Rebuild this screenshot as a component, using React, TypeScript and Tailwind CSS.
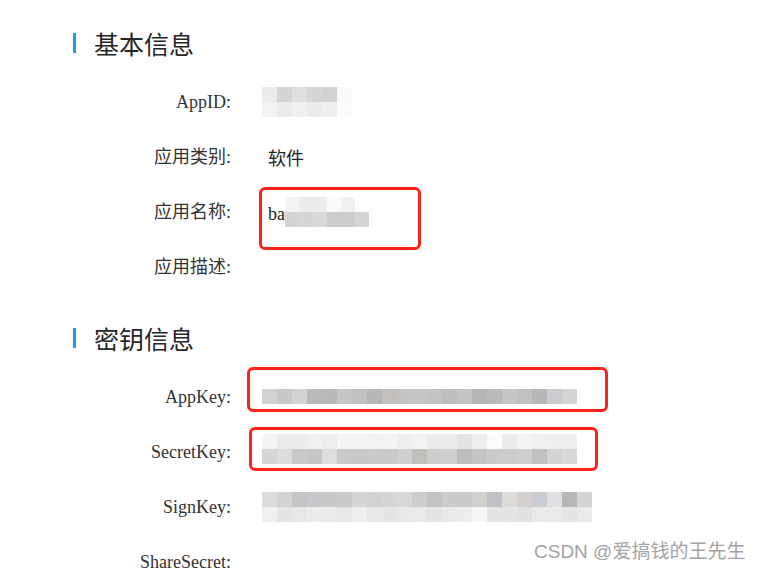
import React from "react";

type Row = { label: string; value?: React.ReactNode };

const LABEL_FONT = {
  fontFamily: '"Liberation Serif", "Noto Sans CJK SC", serif',
};

// blurred (mosaic) values, one array per block row
const appIdBlur = [
  ["#ebebeb", "#d4d4d4", "#dfdfdf", "#d5d5d5", "#d3d2d2", "#f9fafc"],
  ["#f3f3f3", "#ebebeb", "#f0f0f0", "#ebebeb", "#efeeed", "#fafbfc"],
];

const nameBlur = [
  ["#f3f3f3", "#ececec", "#ececec", "#f8f9fb", "#f1f1f1", "#ffffff"],
  ["#d3d3d3", "#d6d6d6", "#d8d8d8", "#cdccca", "#cdcdcd", "#d5d5d6"],
];

const appKeyBlur = [
  [
    "#d2d2d1", "#c8c8c8", "#d3d3d2", "#bbbbbb", "#b9b9b8", "#c6c6c6", "#c2c0c0",
    "#b5b8b9", "#c4c0be", "#c2c4c6", "#c5c5c5", "#c3c3c3", "#bfbdbc", "#c4c4c4",
    "#b5b6b8", "#bbbbbb", "#c6c6c6", "#c1c1c1", "#b8b7b5", "#cbccd0", "#d5d5d6",
  ],
];

const secretKeyBlur = [
  [
    "#f4f4f4", "#ebebeb", "#ececec", "#eff0f2", "#ededed", "#f5f5f5", "#f4f4f4",
    "#f2f2f2", "#f4f4f4", "#eeeeee", "#f3f2f0", "#eaebeb", "#ebebea", "#e4e4e4",
    "#eeeeee", "#fbfbfb", "#ebebeb", "#f4f3f1", "#eef0f2", "#efefef", "#efefef",
  ],
  [
    "#d6d6d6", "#dedddb", "#c9c9cb", "#c5c6c8", "#dfdedc", "#cacaca", "#c8c8c8",
    "#cbcbcb", "#c8c9cb", "#cfcfcf", "#c1c0bd", "#cccdcd", "#cfcfcf", "#bdbdbf",
    "#c4c4c4", "#cacbcd", "#cccccc", "#cfcecc", "#c1c1c1", "#d3d4d6", "#d8d8d8",
  ],
];

const signKeyBlur = [
  [
    "#dcdcdc", "#d2d2d2", "#c5c5c5", "#c7c8cb", "#c8c8c8", "#cbcbcb", "#d6d6d8",
    "#d2d2d2", "#d6d6d6", "#d8d8d7", "#cecdcc", "#c2c4c4", "#cbcbc9", "#cacbca",
    "#d0d0cf", "#bfc3c5", "#dcdcdb", "#d3d0cd", "#c9ccd0", "#e0e0e2", "#bab8b6",
    "#d4d4d4",
  ],
  [
    "#f0f0f0", "#e4e4e4", "#e7e7e7", "#ececec", "#eaeaea", "#e8e8e8", "#f0efed",
    "#e6e8e8", "#e4e6e6", "#e8e8e8", "#e9e9e9", "#e3e5e5", "#e8e9e9", "#ecedec",
    "#f6f6f4", "#e4e4e4", "#e4e5e5", "#e2e1e0", "#e8e9ea", "#eaeaeb", "#e5e5e7",
    "#ebebeb",
  ],
];

function Mosaic({ rows, size = 15 }: { rows: string[][]; size?: number }) {
  return (
    <div className="flex flex-col">
      {rows.map((row, i) => (
        <div key={i} className="flex">
          {row.map((c, j) => (
            <div key={j} style={{ background: c, width: size, height: 15 }} />
          ))}
        </div>
      ))}
    </div>
  );
}

function SectionTitle({ title }: { title: string }) {
  return (
    <div className="flex items-center h-10 gap-[18px]">
      <span className="w-[3px] h-5 bg-[#1c9dea]" />
      <h2
        className="text-[25px] leading-10 text-[#262626] font-normal"
        style={{ fontFamily: '"Noto Sans CJK SC", sans-serif' }}
      >
        {title}
      </h2>
    </div>
  );
}

function InfoRows({ rows }: { rows: Row[] }) {
  return (
    <div className="mt-[11px] flex flex-col">
      {rows.map((r) => (
        <div key={r.label} className="flex items-center h-[55px]">
          <div
            className="w-[158px] text-right text-[18px] text-[#333] leading-none"
            style={LABEL_FONT}
          >
            {r.label}
          </div>
          <div
            className="ml-[31px] flex items-center text-[18px] text-[#222] leading-none"
            style={LABEL_FONT}
          >
            {r.value}
          </div>
        </div>
      ))}
    </div>
  );
}

export default function App() {
  const basic: Row[] = [
    { label: "AppID:", value: <Mosaic rows={appIdBlur} /> },
    {
      label: "应用类别:",
      value: (
        <span className="pl-[6px]" style={{ fontFamily: '"Noto Sans CJK SC", sans-serif' }}>
          软件
        </span>
      ),
    },
    {
      label: "应用名称:",
      value: (
        <div className="flex items-center pl-[6px]">
          <span className="pt-[4px]">ba</span>
          <Mosaic rows={nameBlur} size={14} />
        </div>
      ),
    },
    { label: "应用描述:" },
  ];

  const keys: Row[] = [
    { label: "AppKey:", value: <Mosaic rows={appKeyBlur} /> },
    {
      label: "SecretKey:",
      value: (
        <div className="-mt-[6px]">
          <Mosaic rows={secretKeyBlur} />
        </div>
      ),
    },
    { label: "SignKey:", value: <Mosaic rows={signKeyBlur} /> },
    { label: "ShareSecret:" },
  ];

  return (
    <div className="relative w-full h-[570px] overflow-hidden bg-white">
      <div className="pl-[73px] pt-[23px]">
        <SectionTitle title="基本信息" />
        <InfoRows rows={basic} />
        <div className="mt-[24px]">
          <SectionTitle title="密钥信息" />
          <InfoRows rows={keys} />
        </div>
      </div>

      {/* red annotation boxes drawn over the screenshot */}
      <div className="absolute left-[259px] top-[187px] w-[162px] h-[63px] border-[3px] border-[#ff2219] rounded-[6px]" />
      <div className="absolute left-[247px] top-[367px] w-[361px] h-[45px] border-[3px] border-[#ff2219] rounded-[6px]" />
      <div className="absolute left-[249px] top-[427px] w-[349px] h-[44px] border-[3px] border-[#ff2219] rounded-[6px]" />

      <div
        className="absolute left-[534px] top-[538px] text-[19px] text-[#a3a3a3]"
        style={{ fontFamily: '"Liberation Sans", "Noto Sans CJK SC", sans-serif' }}
      >
        CSDN @爱搞钱的王先生
      </div>
    </div>
  );
}
